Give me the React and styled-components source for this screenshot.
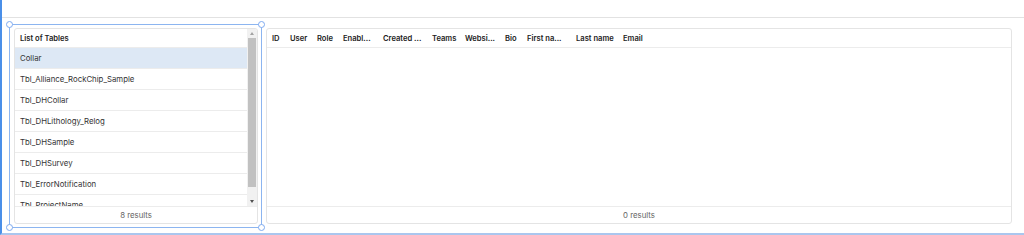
import React from 'react'
import styled, {createGlobalStyle} from 'styled-components'

const Global = createGlobalStyle`
  html, body {
    margin: 0;
    padding: 0;
    background: #fff;
    font-family: Inter, "Noto Sans", sans-serif;
  }
`

const Page = styled.div`
  width: 1024px;
  height: 235px;
  box-sizing: border-box;
  border-left: 2px solid #4a8fe8;
  border-bottom: 2px solid #aac6ee;
  display: flex;
  flex-direction: column;
`

const TopBar = styled.div`
  height: 17px;
  border-bottom: 1px solid #e2e2e2;
  flex-shrink: 0;
`

const Content = styled.div`
  flex: 1;
  display: flex;
  gap: 4px;
  padding: 6px 12px 5px 7px;
  min-height: 0;
`

const Selection = styled.div`
  position: relative;
  width: 253px;
  box-sizing: border-box;
  border: 1px solid #8cb5f0;
  padding: 3px 3px 3px 4px;
  display: flex;
`

const Handle = styled.span`
  position: absolute;
  width: 5px;
  height: 5px;
  border-radius: 50%;
  background: #fff;
  border: 1px solid #7eaaf0;
  ${(p) => (p.top ? 'top: -4px;' : 'bottom: -4px;')}
  ${(p) => (p.left ? 'left: -4px;' : 'right: -4px;')}
`

const Card = styled.div`
  flex: ${(p) => (p.grow ? 1 : 'none')};
  width: ${(p) => (p.grow ? 'auto' : '100%')};
  margin: ${(p) => (p.grow ? '4px 0' : '0')};
  box-sizing: border-box;
  border: 1px solid #e4e4e4;
  border-radius: 3px;
  display: flex;
  flex-direction: column;
  overflow: hidden;
  background: #fff;
`

const Body = styled.div`
  flex: 1;
  display: flex;
  min-height: 0;
  overflow: hidden;
`

const ListColumn = styled.div`
  flex: 1;
  min-width: 0;
  overflow: hidden;
`

const HeaderRow = styled.div`
  height: 18px;
  border-bottom: 1px solid #ececec;
  display: flex;
  align-items: center;
  padding-left: 5px;
  font-size: 7.6px;
  font-weight: 600;
  color: #222;
`

const HeaderCell = styled.div`
  box-sizing: border-box;
  padding-right: 4px;
  width: ${(p) => p.w}px;
  flex-shrink: 0;
  white-space: nowrap;
`

const Row = styled.div`
  height: 20px;
  border-bottom: 1px solid #ececec;
  display: flex;
  align-items: center;
  padding-left: 5px;
  font-size: 7.8px;
  color: #333;
  background: ${(p) => (p.selected ? '#dde8f5' : '#fff')};
`

const Scrollbar = styled.div`
  width: 10px;
  display: flex;
  flex-direction: column;
  background: #f1f1f1;
  flex-shrink: 0;
`

const Arrow = styled.div`
  height: 10px;
  display: flex;
  align-items: center;
  justify-content: center;
  &::before {
    content: '';
    border-left: 2.5px solid transparent;
    border-right: 2.5px solid transparent;
    ${(p) => (p.up ? 'border-bottom: 3px solid #a3a3a3;' : 'border-top: 3px solid #505050;')}
  }
`

const Track = styled.div`
  flex: 1;
  display: flex;
  flex-direction: column;
  padding: 0 0 10px;
`

const Thumb = styled.div`
  height: 149px;
  margin: 0 1px;
  background: #c1c1c1;
`

const Footer = styled.div`
  height: 16px;
  border-top: 1px solid #ececec;
  display: flex;
  align-items: center;
  justify-content: center;
  font-size: 7.8px;
  color: #666;
  flex-shrink: 0;
`

const tables = [
  'Collar',
  'Tbl_Alliance_RockChip_Sample',
  'Tbl_DHCollar',
  'Tbl_DHLithology_Relog',
  'Tbl_DHSample',
  'Tbl_DHSurvey',
  'Tbl_ErrorNotification',
  'Tbl_ProjectName',
]

const columns = [
  ['ID', 18],
  ['User', 27],
  ['Role', 26],
  ['Enabl...', 40],
  ['Created ...', 49],
  ['Teams', 33],
  ['Websi...', 40],
  ['Bio', 22],
  ['First na...', 49],
  ['Last name', 47],
  ['Email', 40],
]

export default function App() {
  return (
    <Page>
      <Global />
      <TopBar />
      <Content>
        <Selection>
          <Handle top left />
          <Handle top />
          <Handle left />
          <Handle />
          <Card>
            <Body>
              <ListColumn>
                <HeaderRow>List of Tables</HeaderRow>
                {tables.map((t, i) => (
                  <Row key={t} selected={i === 0}>{t}</Row>
                ))}
              </ListColumn>
              <Scrollbar>
                <Arrow up />
                <Track>
                  <Thumb />
                </Track>
                <Arrow />
              </Scrollbar>
            </Body>
            <Footer>8 results</Footer>
          </Card>
        </Selection>
        <Card grow>
          <Body>
            <ListColumn>
              <HeaderRow>
                {columns.map(([c, w]) => (
                  <HeaderCell key={c} w={w}>{c}</HeaderCell>
                ))}
              </HeaderRow>
            </ListColumn>
          </Body>
          <Footer>0 results</Footer>
        </Card>
      </Content>
    </Page>
  )
}
